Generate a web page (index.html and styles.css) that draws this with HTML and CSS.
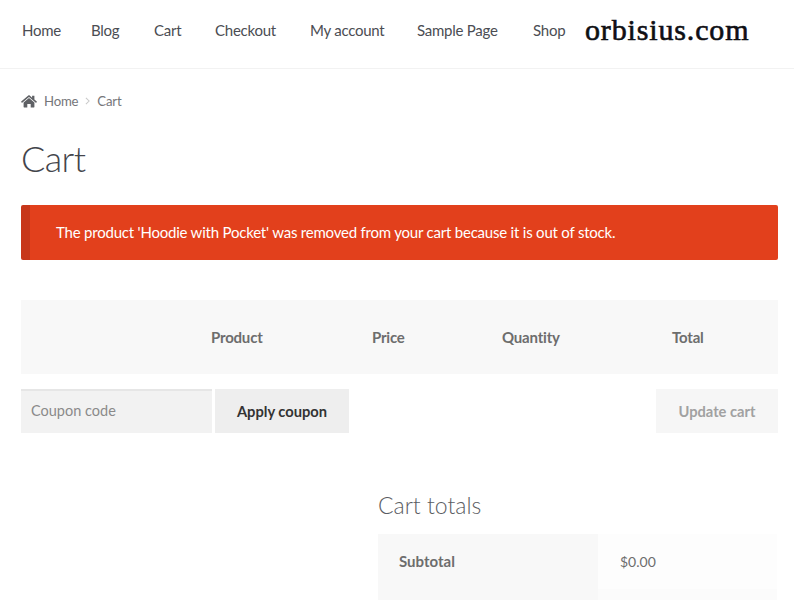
FILE: index.html
```html
<!DOCTYPE html>
<html lang="en">
<head>
<meta charset="utf-8">
<title>Cart</title>
<link rel="stylesheet" href="styles.css">
</head>
<body>
<header class="site-header">
  <nav class="nav">
    <a href="#">Home</a>
    <a href="#">Blog</a>
    <a href="#">Cart</a>
    <a href="#">Checkout</a>
    <a href="#">My account</a>
    <a href="#">Sample Page</a>
    <a href="#">Shop</a>
  </nav>
  <div class="logo">orbisius.com</div>
</header>
<main class="page">
  <div class="crumbs">
    <svg class="home-icon" viewBox="0 0 16 13" aria-hidden="true"><path d="M8 2.9 2.6 7.4v4.7c0 .3.2.5.5.5h3.2V9h3.4v3.6h3.2c.3 0 .5-.2.5-.5V7.4L8 2.9Z"/><path d="M15.8 6.6 13.4 4.6V1c0-.2-.1-.3-.3-.3h-1.700c-.2 0-.3.1-.3.3v1.800L8.700.4C8.300.1 7.700.1 7.300.4L.2 6.600c-.1.1-.1.3 0 .4l.6.700c.1.100.3.100.4 0L8 2 14.800 7.700c.1.100.3.100.4 0l.6-.7c.1-.1.1-.3 0-.4Z"/></svg>
    <a href="#">Home</a>
    <svg class="chevron" viewBox="0 0 6 10" aria-hidden="true"><path d="M1 1l4 4-4 4"/></svg>
    <span>Cart</span>
  </div>
  <h1 class="title">Cart</h1>
  <div class="notice">The product 'Hoodie with Pocket' was removed from your cart because it is out of stock.</div>
  <div class="cart-head">
    <span>Product</span>
    <span>Price</span>
    <span>Quantity</span>
    <span>Total</span>
  </div>
  <div class="actions">
    <input class="coupon" type="text" placeholder="Coupon code">
    <button class="btn btn-apply" type="button">Apply coupon</button>
    <button class="btn btn-update" type="button">Update cart</button>
  </div>
  <section class="totals">
    <h2>Cart totals</h2>
    <div class="totals-table">
      <div class="th">Subtotal</div>
      <div class="td">$0.00</div>
      <div class="th"></div>
      <div class="td alt"></div>
    </div>
  </section>
</main>
</body>
</html>
```
FILE: styles.css
```css
* { box-sizing: border-box; }
html, body { height: 600px; overflow: hidden; }
body {
  margin: 0;
  background: #fff;
  color: #6d6d6d;
  font-family: "Lato", "Open Sans", sans-serif;
  font-size: 16px;
}
a { color: inherit; text-decoration: none; }

.site-header {
  display: flex;
  align-items: center;
  height: 69px;
  padding: 0 0 9px 22px;
  border-bottom: 1px solid #f2f2f2;
}
.nav {
  display: grid;
  grid-template-columns: 69px 63px 61px 95px 107px 116px 52px;
  color: #4b4d53;
  font-size: 15px;
  letter-spacing: -0.25px;
}
.logo {
  color: #0f0f14;
  font-family: "Liberation Serif", serif;
  font-weight: 400;
  font-size: 30px;
  letter-spacing: 0.85px;
  -webkit-text-stroke: 0.6px #0f0f14;
}

.page { padding: 0 16px 0 21px; }
.crumbs {
  display: flex;
  align-items: center;
  height: 20px;
  margin-top: 22px;
  color: #75767a;
  font-size: 13.2px;
  letter-spacing: -0.2px;
}
.home-icon { width: 16px; height: 13px; margin-right: 7px; fill: #5f6165; }
.chevron { width: 5px; height: 8px; margin: 0 7px; fill: none; stroke: #c9c9c9; stroke-width: 1.300; }

.title {
  margin: 18px 0 0;
  height: 58px;
  color: #43454b;
  font-weight: 300;
  font-size: 36px;
  line-height: 58px;
  letter-spacing: -0.6px;
}
.notice {
  height: 55px;
  margin-top: 18px;
  padding-left: 26px;
  border-left: 9px solid #c7371a;
  border-radius: 2px;
  background: #e2401c;
  color: #fff;
  font-size: 15px;
  letter-spacing: -0.21px;
  line-height: 55px;
}
.cart-head {
  display: grid;
  grid-template-columns: 161px 130px 170px auto;
  align-items: center;
  height: 74px;
  margin-top: 40px;
  padding-left: 190px;
  background: #f8f8f8;
  font-weight: 700;
  font-size: 15px;
  letter-spacing: -0.2px;
}
.actions {
  display: flex;
  height: 44px;
  margin-top: 15px;
}
.coupon {
  width: 191px;
  padding: 0 10px 3px;
  border: 0;
  border-top: 2px solid #e6e6e6;
  background: #f2f2f2;
  color: #43454b;
  font: inherit;
  font-size: 14.5px;
}
.coupon::placeholder { color: #8a8a8a; opacity: 1; }
.btn {
  border: 0;
  padding: 0;
  font: inherit;
  font-weight: 700;
  font-size: 14.7px;
}
.btn-apply {
  width: 134px;
  margin-left: 3px;
  background: #eee;
  color: #333;
}
.btn-update {
  width: 122px;
  margin-left: auto;
  background: #f6f6f6;
  color: #a1a1a1;
}
.totals { margin: 48px 0 0 357px; }
.totals h2 {
  margin: 0;
  height: 53px;
  color: #5a5c62;
  font-weight: 300;
  font-size: 23px;
  line-height: 49px;
}
.totals-table {
  display: grid;
  grid-template-columns: 220px 179px;
  grid-template-rows: 55px 30px;
}
.th {
  padding-left: 21px;
  background: #f8f8f8;
  font-weight: 700;
  font-size: 15px;
  line-height: 55px;
}
.td {
  padding-left: 22px;
  background: #fdfdfd;
  font-size: 14px;
  line-height: 55px;
}
.td.alt { background: #fbfbfb; }
```
